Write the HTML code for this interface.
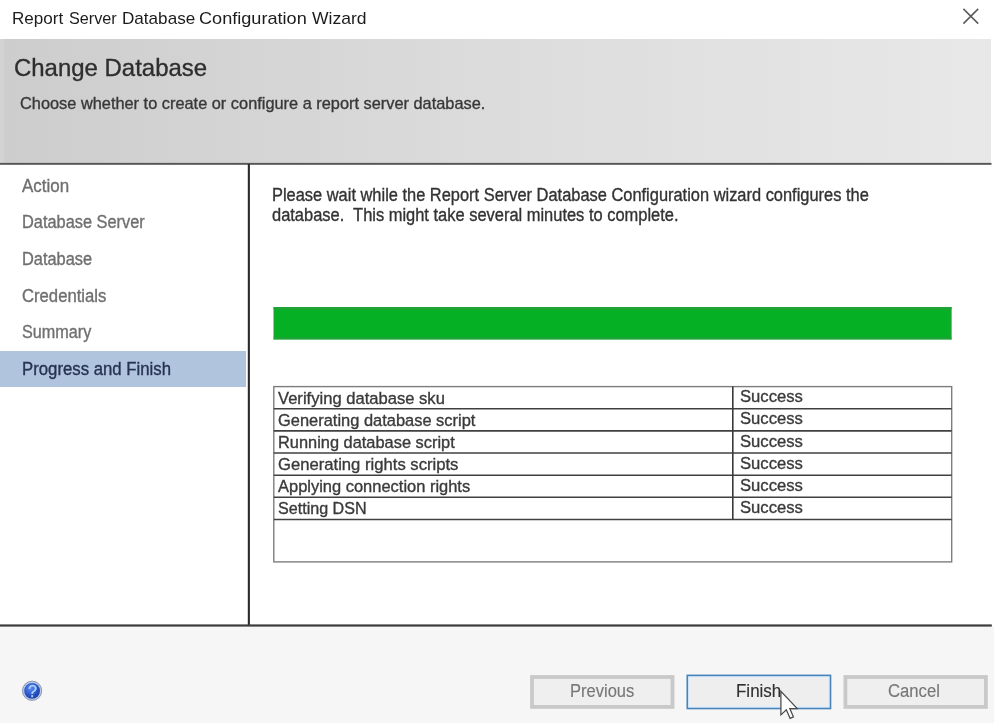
<!DOCTYPE html>
<html>
<head>
<meta charset="utf-8">
<title>Report Server Database Configuration Wizard</title>
<style>
  html, body { margin: 0; padding: 0; }
  body {
    width: 994px; height: 723px; overflow: hidden; position: relative;
    background: #ffffff;
    font-family: "Liberation Sans", sans-serif;
  }
  #wrap { position: absolute; left: 0; top: 0; width: 994px; height: 723px; overflow: hidden; filter: blur(0.45px); background: #fff; }
  .abs { position: absolute; }
  .t { position: absolute; white-space: nowrap; transform-origin: 0 0; -webkit-text-stroke: 0.35px currentColor; }
  .ns { -webkit-text-stroke: 0 transparent; }
  .lt { -webkit-text-stroke: 0.15px currentColor; }
  #header { left: 0; top: 39px; width: 990.5px; height: 125px;
    background: linear-gradient(to right, #cdcdcd 0%, #dcdcdc 50%, #e8e8e8 100%); }
  #sel { left: 0; top: 350.6px; width: 246.4px; height: 36.1px; background: #b1c4de; }
  #footer { left: 0; top: 626px; width: 994px; height: 97px; background: #f6f6f6; }
  #lines { left: 0; top: 0; width: 994px; height: 723px; }
</style>
</head>
<body>
<div id="wrap">
<div id="header" class="abs"></div>
<div class="abs" style="left:0;top:39px;width:3.5px;height:124px;background:#d3d3d3"></div>
<div id="sel" class="abs"></div>
<div id="footer" class="abs"></div>
<svg id="lines" class="abs" width="994" height="723" viewBox="0 0 994 723">
  <!-- header bottom line, sidebar divider, footer line -->
  <rect x="0" y="162.9" width="991.5" height="1.9" fill="#555555"/>
  <rect x="247.8" y="164" width="2.1" height="462" fill="#2a2a2a"/>
  <rect x="0" y="624.4" width="991.8" height="2.2" fill="#3c3c3c"/>
  <!-- close X -->
  <path d="M963.4 8.9 L978.2 23.6 M978.2 8.9 L963.4 23.6" stroke="#5a5a5a" stroke-width="1.5" fill="none"/>
  <!-- progress bar -->
  <rect x="273.7" y="307" width="677.7" height="32.4" fill="#06b025"/>
  <rect x="273.7" y="307" width="677.7" height="2.6" fill="#1fa237"/>
  <rect x="273.7" y="337.2" width="677.7" height="2.2" fill="#1fa237"/>
  <rect x="273.7" y="307" width="1.2" height="32.4" fill="#1fa237"/>
  <rect x="950.2" y="307" width="1.2" height="32.4" fill="#1fa237"/>
  <!-- table -->
  <rect x="273.8" y="386.6" width="677.9" height="175.3" fill="#ffffff" stroke="#7d7d7d" stroke-width="1.4"/>
  <g stroke="#404040" stroke-width="1.6">
    <line x1="273.8" y1="408.8" x2="951.7" y2="408.8"/>
    <line x1="273.8" y1="430.9" x2="951.7" y2="430.9"/>
    <line x1="273.8" y1="453.0" x2="951.7" y2="453.0"/>
    <line x1="273.8" y1="475.2" x2="951.7" y2="475.2"/>
    <line x1="273.8" y1="497.3" x2="951.7" y2="497.3"/>
    <line x1="273.8" y1="519.5" x2="951.7" y2="519.5"/>
    <line x1="732.8" y1="386.6" x2="732.8" y2="519.5" stroke="#3a3a3a"/>
  </g>
  <!-- buttons -->
  <rect x="532" y="677" width="140.5" height="29.9" fill="#efefef" stroke="#c9c9c9" stroke-width="3.8"/>
  <rect x="845.4" y="677" width="140.5" height="29.9" fill="#efefef" stroke="#c9c9c9" stroke-width="3.8"/>
  <rect x="686.5" y="674.6" width="144.8" height="34.7" fill="#d9ecfc"/>
  <rect x="687.3" y="675.4" width="143.2" height="33.1" fill="#deefff" stroke="#4b82b8" stroke-width="1.6"/>
  <rect x="689.4" y="677.5" width="139" height="28.9" fill="#eeeeee"/>
  <!-- help icon -->
  <defs>
    <radialGradient id="hg" cx="0.4" cy="0.35" r="0.7">
      <stop offset="0" stop-color="#5b8cf0"/>
      <stop offset="0.6" stop-color="#2a55c8"/>
      <stop offset="1" stop-color="#1b3aa0"/>
    </radialGradient>
  </defs>
  <circle cx="32.1" cy="690.8" r="10" fill="#b9c9ea"/>
  <circle cx="32.1" cy="690.8" r="9.6" fill="none" stroke="#8b93a8" stroke-width="0.9"/>
  <circle cx="32.1" cy="690.8" r="7.9" fill="url(#hg)"/>
</svg>
<div class="t ns" style="left:11.81px;top:8.75px;font-size:16.6px;line-height:20px;color:#1c1c1c;transform:scaleX(1.0289)">Report</div>
<div class="t ns" style="left:68.67px;top:8.75px;font-size:16.6px;line-height:20px;color:#1c1c1c;transform:scaleX(0.9771)">Server</div>
<div class="t ns" style="left:121.81px;top:8.75px;font-size:16.6px;line-height:20px;color:#1c1c1c;transform:scaleX(1.0304)">Database</div>
<div class="t ns" style="left:199.48px;top:8.75px;font-size:16.6px;line-height:20px;color:#1c1c1c;transform:scaleX(1.0918)">Configuration</div>
<div class="t ns" style="left:312.04px;top:8.75px;font-size:16.6px;line-height:20px;color:#1c1c1c;transform:scaleX(1.0567)">Wizard</div>
<div class="t" style="left:13.82px;top:52.55px;font-size:24.4px;line-height:29px;color:#2e2e2e;transform:scaleX(0.9820)">Change Database</div>
<div class="t" style="left:20.28px;top:94.31px;font-size:17.0px;line-height:20px;color:#383838;transform:scaleX(0.9618)">Choose whether to create or configure a report server database.</div>
<div class="t" style="left:21.60px;top:175.84px;font-size:17.5px;line-height:21px;color:#6f6f6f;transform:scaleX(0.9684)">Action</div>
<div class="t" style="left:21.60px;top:211.74px;font-size:17.5px;line-height:21px;color:#6f6f6f;transform:scaleX(0.9344)">Database Server</div>
<div class="t" style="left:21.60px;top:248.54px;font-size:17.5px;line-height:21px;color:#6f6f6f;transform:scaleX(0.9360)">Database</div>
<div class="t" style="left:21.60px;top:286.14px;font-size:17.5px;line-height:21px;color:#6f6f6f;transform:scaleX(0.9527)">Credentials</div>
<div class="t" style="left:21.60px;top:321.54px;font-size:17.5px;line-height:21px;color:#6f6f6f;transform:scaleX(0.9258)">Summary</div>
<div class="t" style="left:21.60px;top:359.14px;font-size:17.5px;line-height:21px;color:#263350;transform:scaleX(0.9573)">Progress and Finish</div>
<div class="t" style="left:271.60px;top:183.76px;font-size:18.0px;line-height:22px;color:#333333;transform:scaleX(0.9120)">Please wait while the Report Server Database Configuration wizard configures the</div>
<div class="t" style="left:271.60px;top:204.36px;font-size:18.0px;line-height:22px;color:#333333;transform:scaleX(0.9137)">database.&nbsp; This might take several minutes to complete.</div>
<div class="t lt" style="left:569.89px;top:681.40px;font-size:17.6px;line-height:21px;color:#777777;transform:scaleX(0.9389)">Previous</div>
<div class="t lt" style="left:736.35px;top:681.40px;font-size:17.6px;line-height:21px;color:#303030;transform:scaleX(0.9650)">Finish</div>
<div class="t lt" style="left:888.45px;top:681.40px;font-size:17.6px;line-height:21px;color:#777777;transform:scaleX(0.9486)">Cancel</div>
<div class="t" style="left:278.10px;top:387.55px;font-size:16.3px;line-height:20px;color:#3a3a3a;transform:scaleX(1.0187)">Verifying database sku</div>
<div class="t" style="left:739.67px;top:385.64px;font-size:17.2px;line-height:21px;color:#3a3a3a;transform:scaleX(0.9685)">Success</div>
<div class="t" style="left:278.10px;top:409.71px;font-size:16.3px;line-height:20px;color:#3a3a3a;transform:scaleX(1.0097)">Generating database script</div>
<div class="t" style="left:739.67px;top:407.80px;font-size:17.2px;line-height:21px;color:#3a3a3a;transform:scaleX(0.9685)">Success</div>
<div class="t" style="left:278.10px;top:431.87px;font-size:16.3px;line-height:20px;color:#3a3a3a;transform:scaleX(1.0063)">Running database script</div>
<div class="t" style="left:739.67px;top:430.96px;font-size:17.2px;line-height:21px;color:#3a3a3a;transform:scaleX(0.9685)">Success</div>
<div class="t" style="left:278.10px;top:454.03px;font-size:16.3px;line-height:20px;color:#3a3a3a;transform:scaleX(1.0225)">Generating rights scripts</div>
<div class="t" style="left:739.67px;top:453.12px;font-size:17.2px;line-height:21px;color:#3a3a3a;transform:scaleX(0.9685)">Success</div>
<div class="t" style="left:278.10px;top:476.19px;font-size:16.3px;line-height:20px;color:#3a3a3a;transform:scaleX(1.0111)">Applying connection rights</div>
<div class="t" style="left:739.67px;top:475.28px;font-size:17.2px;line-height:21px;color:#3a3a3a;transform:scaleX(0.9685)">Success</div>
<div class="t" style="left:278.10px;top:498.35px;font-size:16.3px;line-height:20px;color:#3a3a3a;transform:scaleX(0.9892)">Setting DSN</div>
<div class="t" style="left:739.67px;top:497.44px;font-size:17.2px;line-height:21px;color:#3a3a3a;transform:scaleX(0.9685)">Success</div>
<div class="t" style="left:28.1px;top:682.4px;font-size:17px;line-height:20px;color:#aad3fb;transform:scaleX(0.95)">?</div>
<svg class="abs" style="left:0;top:0" width="994" height="723" viewBox="0 0 994 723">
  <!-- mouse cursor -->
  <path transform="translate(780.9 691.2) scale(1.46)" d="M0 0 L0 16.2 L3.7 12.7 L6.3 18.6 L8.6 17.6 L6.1 11.9 L11.2 11.9 Z" fill="#ffffff" stroke="#4a4a4a" stroke-width="0.85" stroke-linejoin="miter"/>
</svg>
</div>
</body>
</html>
